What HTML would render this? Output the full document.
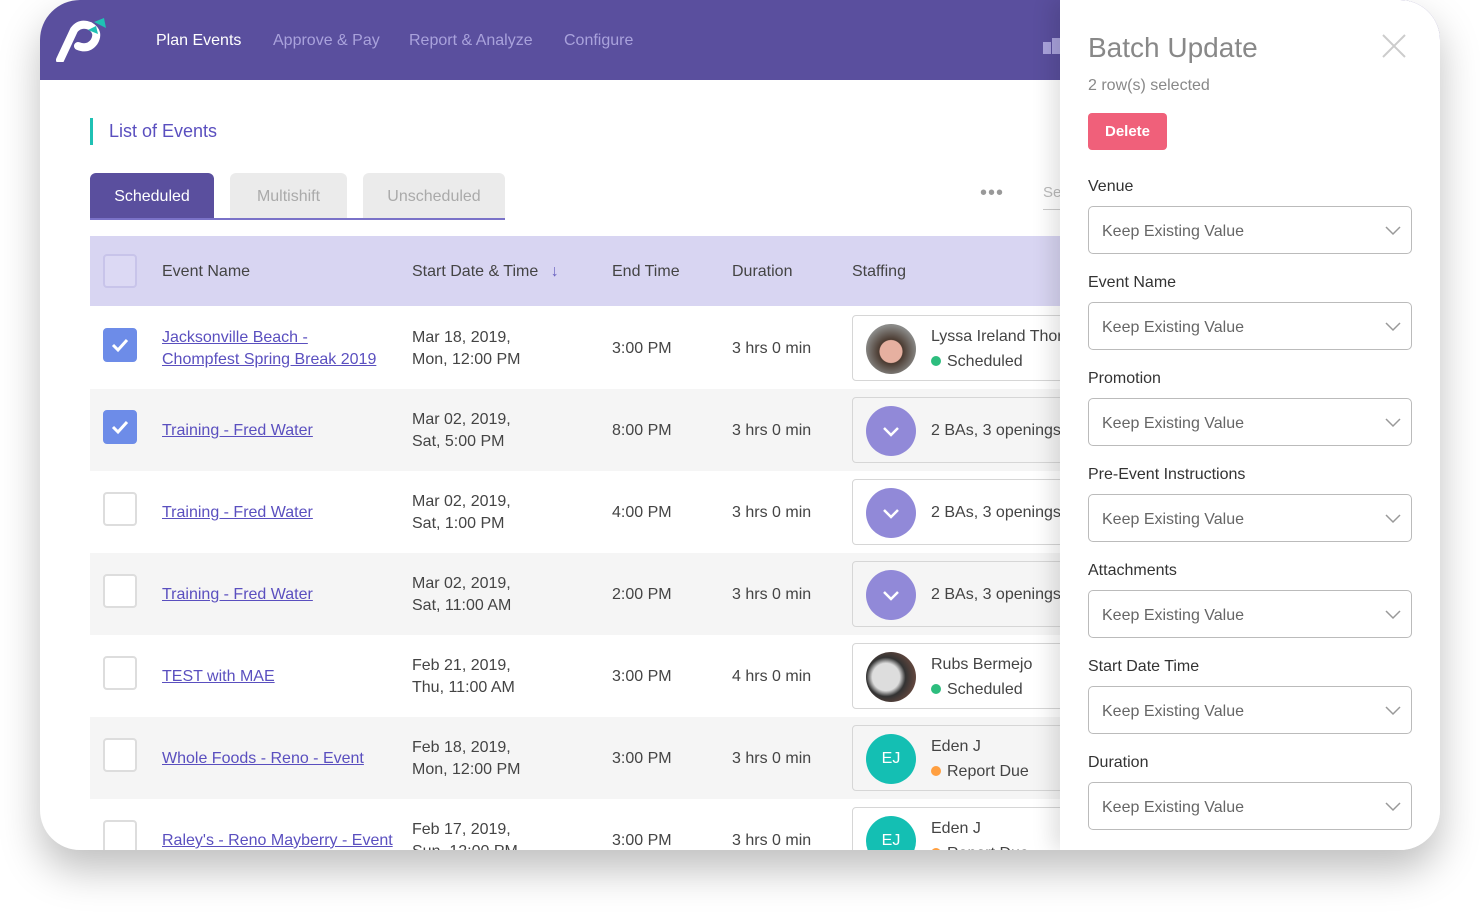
<!DOCTYPE html>
<html><head><meta charset="utf-8"><style>
*{box-sizing:border-box;margin:0;padding:0}
body{width:1480px;height:920px;background:#fff;font-family:"Liberation Sans",sans-serif;position:relative;overflow:hidden}
.card{position:absolute;left:40px;top:0;width:1400px;height:850px;border-radius:40px;overflow:hidden;background:#fff;box-shadow:0 20px 40px rgba(0,0,0,.25)}
.nav{position:absolute;left:0;top:0;width:1400px;height:80px;background:#5a4f9e}
.nav a{position:absolute;top:32px;font-size:16px;color:#a9a2dc;text-decoration:none}
.abs{position:absolute}
.title{left:50px;top:118px;border-left:3px solid #1fc1b4;padding-left:16px;height:27px;font-size:18px;color:#5a4fbf;line-height:26px}
.tab{position:absolute;top:173px;height:46px;border-radius:6px 6px 0 0;font-size:16px;text-align:center;line-height:48px}
.thead{position:absolute;left:50px;top:236px;width:1000px;height:70px;background:#d8d5f2}
.row{position:absolute;left:50px;width:1000px;height:82px}
.cb{position:absolute;left:13px;width:34px;height:34px;border:2px solid #ddd;border-radius:4px;background:#fff}
.cb.on{background:#6d8ce8;border-color:#6d8ce8}
.t{position:absolute;font-size:16px;color:#444;line-height:22px}
.lnk{color:#5a4fbf;text-decoration:underline}
.staff{position:absolute;left:762px;width:240px;height:66px;border:1px solid #d6d6d6;border-radius:4px;background:#fff}
.staff .t{line-height:25px}
.av{position:absolute;left:13px;top:8px;width:50px;height:50px;border-radius:50%}
.dot{display:inline-block;width:10px;height:10px;border-radius:50%;margin-right:6px}
.panel{position:absolute;left:1020px;top:0;width:380px;height:850px;background:#fff;box-shadow:-8px 0 20px rgba(0,0,0,.12)}
.lbl{position:absolute;left:28px;font-size:16px;color:#333}
.sel{position:absolute;left:28px;width:324px;height:48px;border:1px solid #bbb;border-radius:5px;font-size:16px;color:#666;padding-left:13px;line-height:50px}
.sel svg{position:absolute;right:10px;top:19px}
</style></head><body>
<div class="card">
<div class="nav">
<svg class="abs" style="left:14px;top:18px" width="56" height="44" viewBox="0 0 56 44"><path d="M6 42 L20 12 Q26 4 36 8 Q46 14 40 24 Q34 32 24 28" fill="none" stroke="#fff" stroke-width="8" stroke-linecap="round"/><path d="M40 4 L50 0 L52 10 Z" fill="#1fc1b4"/><path d="M34 12 L42 8 L44 16Z" fill="#1fc1b4"/></svg>
<a style="left:116px;color:#fff">Plan Events</a>
<a style="left:233px">Approve &amp; Pay</a>
<a style="left:369px">Report &amp; Analyze</a>
<a style="left:524px">Configure</a>
<div class="abs" style="left:1003px;top:42px;width:8px;height:12px;background:#a9a2dc"></div>
<div class="abs" style="left:1012px;top:38px;width:8px;height:16px;background:#a9a2dc"></div>
</div>
<div class="abs title">List of Events</div>
<div class="tab" style="left:50px;width:124px;background:#5a4f9e;color:#fff">Scheduled</div>
<div class="tab" style="left:190px;width:117px;background:#ebebeb;color:#aaa">Multishift</div>
<div class="tab" style="left:323px;width:142px;background:#ebebeb;color:#aaa">Unscheduled</div>
<div class="abs" style="left:50px;top:218px;width:415px;height:2px;background:#7a72c8"></div>
<div class="abs" style="left:940px;top:182px;font-size:20px;color:#999;letter-spacing:1px">•••</div>
<div class="abs" style="left:1003px;top:184px;font-size:15px;color:#bbb">Se</div>
<div class="abs" style="left:1003px;top:209px;width:20px;height:1px;background:#ccc"></div>
<div class="thead">
<div class="cb" style="top:18px;border-color:#c8c4ea;background:#dcd9f4"></div>
<div class="t" style="left:72px;top:25px">Event Name</div>
<div class="t" style="left:322px;top:25px">Start Date &amp; Time <span style="color:#6a62c0;margin-left:8px">↓</span></div>
<div class="t" style="left:522px;top:25px">End Time</div>
<div class="t" style="left:642px;top:25px">Duration</div>
<div class="t" style="left:762px;top:25px">Staffing</div>
</div>

<div class="row" style="top:307px">
<div class="cb on" style="top:21px"><svg width="30" height="30" viewBox="0 0 30 30"><path d="M8 15l5 5 9-10" stroke="#fff" stroke-width="3" fill="none"/></svg></div>
<div class="t lnk" style="left:72px;top:20px">Jacksonville Beach -<br>Chompfest Spring Break 2019</div>
<div class="t" style="left:322px;top:20px">Mar 18, 2019,<br>Mon, 12:00 PM</div>
<div class="t" style="left:522px;top:31px">3:00 PM</div><div class="t" style="left:642px;top:31px">3 hrs 0 min</div>
<div class="staff" style="top:8px"><div class="av" style="background:radial-gradient(circle at 50% 55%,#e6b0a0 0 30%,#4a3a30 32%,#8a8a88 70%)"></div><div class="t" style="left:78px;top:8px">Lyssa Ireland Thor<br><span class="dot" style="background:#2dbd7e"></span>Scheduled</div></div>
</div>
<div class="row" style="top:389px;background:#f5f5f5">
<div class="cb on" style="top:21px"><svg width="30" height="30" viewBox="0 0 30 30"><path d="M8 15l5 5 9-10" stroke="#fff" stroke-width="3" fill="none"/></svg></div>
<div class="t lnk" style="left:72px;top:31px">Training - Fred Water</div>
<div class="t" style="left:322px;top:20px">Mar 02, 2019,<br>Sat, 5:00 PM</div>
<div class="t" style="left:522px;top:31px">8:00 PM</div><div class="t" style="left:642px;top:31px">3 hrs 0 min</div>
<div class="staff" style="top:8px;background:#f5f5f5"><div class="av" style="background:#9189d8"><svg width="50" height="50"><path d="M18 22l7 7 7-7" stroke="#fff" stroke-width="2.5" fill="none"/></svg></div><div class="t" style="left:78px;top:20px">2 BAs, 3 openings</div></div>
</div>
<div class="row" style="top:471px">
<div class="cb" style="top:21px"></div>
<div class="t lnk" style="left:72px;top:31px">Training - Fred Water</div>
<div class="t" style="left:322px;top:20px">Mar 02, 2019,<br>Sat, 1:00 PM</div>
<div class="t" style="left:522px;top:31px">4:00 PM</div><div class="t" style="left:642px;top:31px">3 hrs 0 min</div>
<div class="staff" style="top:8px"><div class="av" style="background:#9189d8"><svg width="50" height="50"><path d="M18 22l7 7 7-7" stroke="#fff" stroke-width="2.5" fill="none"/></svg></div><div class="t" style="left:78px;top:20px">2 BAs, 3 openings</div></div>
</div>
<div class="row" style="top:553px;background:#f5f5f5">
<div class="cb" style="top:21px"></div>
<div class="t lnk" style="left:72px;top:31px">Training - Fred Water</div>
<div class="t" style="left:322px;top:20px">Mar 02, 2019,<br>Sat, 11:00 AM</div>
<div class="t" style="left:522px;top:31px">2:00 PM</div><div class="t" style="left:642px;top:31px">3 hrs 0 min</div>
<div class="staff" style="top:8px;background:#f5f5f5"><div class="av" style="background:#9189d8"><svg width="50" height="50"><path d="M18 22l7 7 7-7" stroke="#fff" stroke-width="2.5" fill="none"/></svg></div><div class="t" style="left:78px;top:20px">2 BAs, 3 openings</div></div>
</div>
<div class="row" style="top:635px">
<div class="cb" style="top:21px"></div>
<div class="t lnk" style="left:72px;top:31px">TEST with MAE</div>
<div class="t" style="left:322px;top:20px">Feb 21, 2019,<br>Thu, 11:00 AM</div>
<div class="t" style="left:522px;top:31px">3:00 PM</div><div class="t" style="left:642px;top:31px">4 hrs 0 min</div>
<div class="staff" style="top:8px"><div class="av" style="background:radial-gradient(circle at 40% 50%,#ddd 0 35%,#333 50%,#6a4a40 80%)"></div><div class="t" style="left:78px;top:8px">Rubs Bermejo<br><span class="dot" style="background:#2dbd7e"></span>Scheduled</div></div>
</div>
<div class="row" style="top:717px;background:#f5f5f5">
<div class="cb" style="top:21px"></div>
<div class="t lnk" style="left:72px;top:31px">Whole Foods - Reno - Event</div>
<div class="t" style="left:322px;top:20px">Feb 18, 2019,<br>Mon, 12:00 PM</div>
<div class="t" style="left:522px;top:31px">3:00 PM</div><div class="t" style="left:642px;top:31px">3 hrs 0 min</div>
<div class="staff" style="top:8px;background:#f5f5f5"><div class="av" style="background:#14bfb3;color:#fff;font-size:16px;text-align:center;line-height:50px">EJ</div><div class="t" style="left:78px;top:8px">Eden J<br><span class="dot" style="background:#ff9f40"></span>Report Due</div></div>
</div>
<div class="row" style="top:799px">
<div class="cb" style="top:21px"></div>
<div class="t lnk" style="left:72px;top:31px">Raley's - Reno Mayberry - Event</div>
<div class="t" style="left:322px;top:20px">Feb 17, 2019,<br>Sun, 12:00 PM</div>
<div class="t" style="left:522px;top:31px">3:00 PM</div><div class="t" style="left:642px;top:31px">3 hrs 0 min</div>
<div class="staff" style="top:8px"><div class="av" style="background:#14bfb3;color:#fff;font-size:16px;text-align:center;line-height:50px">EJ</div><div class="t" style="left:78px;top:8px">Eden J<br><span class="dot" style="background:#ff9f40"></span>Report Due</div></div>
</div>

<div class="panel">
<div class="abs" style="left:28px;top:32px;font-size:28px;color:#888">Batch Update</div>
<svg class="abs" style="left:322px;top:34px" width="24" height="24"><path d="M1 1L23 23M23 1L1 23" stroke="#ccc" stroke-width="2"/></svg>
<div class="abs" style="left:28px;top:77px;font-size:16px;color:#888">2 row(s) selected</div>
<div class="abs" style="left:28px;top:113px;width:79px;height:37px;background:#f0607a;border-radius:4px;color:#fff;font-size:15px;font-weight:bold;text-align:center;line-height:37px">Delete</div>
<div class="lbl" style="top:178px">Venue</div><div class="sel" style="top:206px">Keep Existing Value<svg width="16" height="10"><path d="M1 1l7 7 7-7" stroke="#999" stroke-width="1.5" fill="none"/></svg></div>
<div class="lbl" style="top:274px">Event Name</div><div class="sel" style="top:302px">Keep Existing Value<svg width="16" height="10"><path d="M1 1l7 7 7-7" stroke="#999" stroke-width="1.5" fill="none"/></svg></div>
<div class="lbl" style="top:370px">Promotion</div><div class="sel" style="top:398px">Keep Existing Value<svg width="16" height="10"><path d="M1 1l7 7 7-7" stroke="#999" stroke-width="1.5" fill="none"/></svg></div>
<div class="lbl" style="top:466px">Pre-Event Instructions</div><div class="sel" style="top:494px">Keep Existing Value<svg width="16" height="10"><path d="M1 1l7 7 7-7" stroke="#999" stroke-width="1.5" fill="none"/></svg></div>
<div class="lbl" style="top:562px">Attachments</div><div class="sel" style="top:590px">Keep Existing Value<svg width="16" height="10"><path d="M1 1l7 7 7-7" stroke="#999" stroke-width="1.5" fill="none"/></svg></div>
<div class="lbl" style="top:658px">Start Date Time</div><div class="sel" style="top:686px">Keep Existing Value<svg width="16" height="10"><path d="M1 1l7 7 7-7" stroke="#999" stroke-width="1.5" fill="none"/></svg></div>
<div class="lbl" style="top:754px">Duration</div><div class="sel" style="top:782px">Keep Existing Value<svg width="16" height="10"><path d="M1 1l7 7 7-7" stroke="#999" stroke-width="1.5" fill="none"/></svg></div>
</div>
</div>
</body></html>
